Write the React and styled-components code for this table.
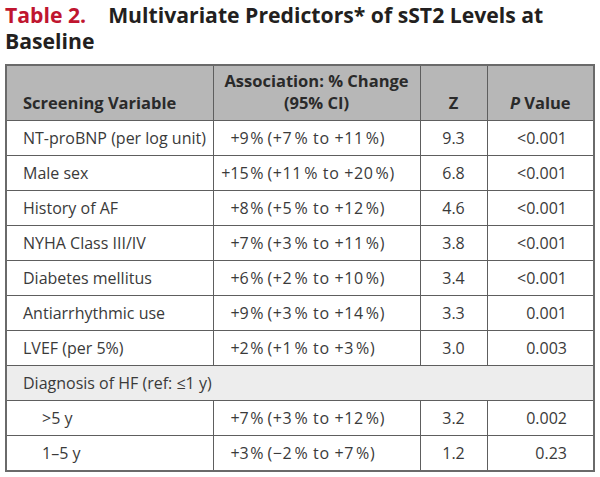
import React from "react";
import styled, { createGlobalStyle } from "styled-components";

const Global = createGlobalStyle`
  html, body { margin: 0; padding: 0; background: #fff; }
  body { font-family: "Open Sans", "Noto Sans", sans-serif; }
`;

const Page = styled.div`
  width: 600px;
  height: 477px;
  padding: 2px 8px 0 5px;
  box-sizing: border-box;
  background: #fff;
  overflow: hidden;
`;

const Title = styled.h1`
  margin: 0;
  font-size: 21.2px;
  line-height: 26px;
  font-weight: 700;
  color: #231f20;
`;

const Label = styled.span`
  color: #c0152f;
  margin-right: 22px;
`;

const Table = styled.table`
  margin-top: 10px;
  border-collapse: collapse;
  table-layout: fixed;
  width: 588px;
  border: 2px solid #6a6a6a;
  font-size: 16px;
  color: #3a3a3a;
`;

const Head = styled.th`
  background: #b7b7b7;
  border: 1.5px solid #5e5e5e;
  height: 48px;
  vertical-align: bottom;
  padding: 0 6px 6px ${(p) => (p.$left ? "16px" : "6px")};
  text-align: ${(p) => (p.$left ? "left" : "center")};
  font-size: 16.5px;
  line-height: 22px;
  font-weight: 700;
  color: #2a2a2a;
`;

const Row = styled.tr`
  height: 35px;
  background: ${(p) => (p.$group ? "#ededed" : "#fff")};
`;

const Cell = styled.td`
  border: 1.5px solid #5e5e5e;
  padding: 0 ${(p) => p.$pr || "6px"} 0 ${(p) => p.$pl || "6px"};
  text-align: ${(p) => p.$align || "left"};
  white-space: nowrap;
  line-height: 22px;
`;

const Assoc = styled.div`
  display: grid;
  grid-template-columns: 44px auto;
  column-gap: 4px;
`;

const Est = styled.span`
  text-align: right;
`;

const CI = styled.span`
  letter-spacing: 0.6px;
`;

const H = "\u200A";
const pc = (s) => s.replace(/%/g, H + "%");

const rows = [
  ["NT-proBNP (per log unit)", "+9%", "(+7% to +11%)", "9.3", "<0.001"],
  ["Male sex", "+15%", "(+11% to +20%)", "6.8", "<0.001"],
  ["History of AF", "+8%", "(+5% to +12%)", "4.6", "<0.001"],
  ["NYHA Class III/IV", "+7%", "(+3% to +11%)", "3.8", "<0.001"],
  ["Diabetes mellitus", "+6%", "(+2% to +10%)", "3.4", "<0.001"],
  ["Antiarrhythmic use", "+9%", "(+3% to +14%)", "3.3", "0.001"],
  ["LVEF (per 5%)", "+2%", "(+1% to +3%)", "3.0", "0.003"],
];

const sub = [
  [">5 y", "+7%", "(+3% to +12%)", "3.2", "0.002"],
  ["1\u20135 y", "+3%", "(\u22122% to +7%)", "1.2", "0.23"],
];

function DataRow({ r, indent }) {
  return (
    <Row>
      <Cell $pl={indent ? "35px" : "16px"}>{r[0]}</Cell>
      <Cell>
        <Assoc>
          <Est>{pc(r[1])}</Est>
          <CI>{pc(r[2])}</CI>
        </Assoc>
      </Cell>
      <Cell $align="center">{r[3]}</Cell>
      <Cell $align="right" $pr="26px">{r[4]}</Cell>
    </Row>
  );
}

export default function App() {
  return (
    <Page>
      <Global />
      <Title>
        <Label>Table 2.</Label>Multivariate Predictors* of sST2 Levels at Baseline
      </Title>
      <Table>
        <colgroup>
          <col style={{ width: 207 }} />
          <col style={{ width: 207 }} />
          <col style={{ width: 67 }} />
          <col style={{ width: 107 }} />
        </colgroup>
        <thead>
          <tr>
            <Head $left>Screening Variable</Head>
            <Head>
              Association: % Change
              <br />
              (95% CI)
            </Head>
            <Head>Z</Head>
            <Head>
              <i>P</i> Value
            </Head>
          </tr>
        </thead>
        <tbody>
          {rows.map((r) => (
            <DataRow key={r[0]} r={r} />
          ))}
          <Row $group>
            <Cell colSpan={4} $pl="16px">
              Diagnosis of HF (ref: ≤1 y)
            </Cell>
          </Row>
          {sub.map((r) => (
            <DataRow key={r[0]} r={r} indent />
          ))}
        </tbody>
      </Table>
    </Page>
  );
}
